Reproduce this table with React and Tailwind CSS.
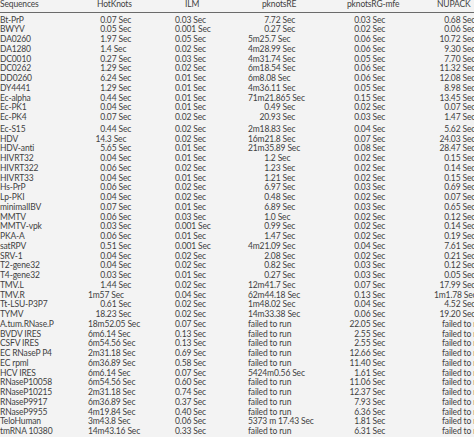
const rows = [
  ['Bt-PrP', '0.07 Sec', '0.03 Sec', '7.72 Sec', '0.03 Sec', '0.68 Sec'],
  ['BWYV', '0.05 Sec', '0.001 Sec', '0.27 Sec', '0.02 Sec', '0.06 Sec'],
  ['DA0260', '1.97 Sec', '0.05 Sec', '5m25.7 Sec', '0.06 Sec', '10.72 Sec'],
  ['DA1280', '1.4 Sec', '0.02 Sec', '4m28.99 Sec', '0.06 Sec', '9.30 Sec'],
  ['DC0010', '0.27 Sec', '0.03 Sec', '4m31.74 Sec', '0.05 Sec', '7.70 Sec'],
  ['DC0262', '1.29 Sec', '0.02 Sec', '6m18.54 Sec', '0.06 Sec', '11.32 Sec'],
  ['DD0260', '6.24 Sec', '0.01 Sec', '6m8.08 Sec', '0.06 Sec', '12.08 Sec'],
  ['DY4441', '1.29 Sec', '0.01 Sec', '4m36.11 Sec', '0.05 Sec', '8.98 Sec'],
  ['Ec-alpha', '0.44 Sec', '0.01 Sec', '71m21.865 Sec', '0.15 Sec', '13.45 Sec'],
  ['Ec-PK1', '0.04 Sec', '0.01 Sec', '0.49 Sec', '0.02 Sec', '0.07 Sec'],
  ['Ec-PK4', '0.07 Sec', '0.02 Sec', '20.93 Sec', '0.03 Sec', '1.47 Sec'],
];

const rows2 = [
  ['Ec-S15', '0.44 Sec', '0.02 Sec', '2m18.83 Sec', '0.04 Sec', '5.62 Sec'],
  ['HDV', '14.3 Sec', '0.02 Sec', '16m21.8 Sec', '0.07 Sec', '24.03 Sec'],
  ['HDV-anti', '5.65 Sec', '0.01 Sec', '21m35.89 Sec', '0.08 Sec', '28.47 Sec'],
  ['HIVRT32', '0.04 Sec', '0.01 Sec', '1.2 Sec', '0.02 Sec', '0.15 Sec'],
  ['HIVRT322', '0.06 Sec', '0.02 Sec', '1.23 Sec', '0.02 Sec', '0.14 Sec'],
  ['HIVRT33', '0.04 Sec', '0.01 Sec', '1.21 Sec', '0.02 Sec', '0.15 Sec'],
  ['Hs-PrP', '0.06 Sec', '0.02 Sec', '6.97 Sec', '0.03 Sec', '0.69 Sec'],
  ['Lp-PKI', '0.04 Sec', '0.02 Sec', '0.48 Sec', '0.02 Sec', '0.07 Sec'],
  ['minimalIBV', '0.07 Sec', '0.01 Sec', '6.89 Sec', '0.03 Sec', '0.65 Sec'],
  ['MMTV', '0.06 Sec', '0.03 Sec', '1.0 Sec', '0.02 Sec', '0.12 Sec'],
  ['MMTV-vpk', '0.03 Sec', '0.001 Sec', '0.99 Sec', '0.02 Sec', '0.14 Sec'],
  ['PKA-A', '0.06 Sec', '0.01 Sec', '1.47 Sec', '0.02 Sec', '0.19 Sec'],
  ['satRPV', '0.51 Sec', '0.001 Sec', '4m21.09 Sec', '0.04 Sec', '7.61 Sec'],
  ['SRV-1', '0.04 Sec', '0.02 Sec', '2.08 Sec', '0.02 Sec', '0.21 Sec'],
  ['T2-gene32', '0.04 Sec', '0.02 Sec', '0.82 Sec', '0.03 Sec', '0.12 Sec'],
  ['T4-gene32', '0.03 Sec', '0.01 Sec', '0.27 Sec', '0.03 Sec', '0.05 Sec'],
  ['TMV.L', '1.44 Sec', '0.02 Sec', '12m41.7 Sec', '0.07 Sec', '17.99 Sec'],
  ['TMV.R', '1m57 Sec', '0.04 Sec', '62m44.18 Sec', '0.13 Sec', '1m1.78 Sec'],
  ['Tt-LSU-P3P7', '0.61 Sec', '0.02 Sec', '1m48.02 Sec', '0.04 Sec', '4.52 Sec'],
  ['TYMV', '18.23 Sec', '0.02 Sec', '14m33.38 Sec', '0.06 Sec', '19.20 Sec'],
  ['A.tum.RNase.P', '18m52.05 Sec', '0.07 Sec', 'failed to run', '22.05 Sec', 'failed to run'],
  ['BVDV IRES', '6m6.14 Sec', '0.13 Sec', 'failed to run', '2.55 Sec', 'failed to run'],
  ['CSFV IRES', '6m54.56 Sec', '0.13 Sec', 'failed to run', '2.55 Sec', 'failed to run'],
  ['EC RNaseP P4', '2m31.18 Sec', '0.69 Sec', 'failed to run', '12.66 Sec', 'failed to run'],
  ['EC rpml', '6m36.89 Sec', '0.58 Sec', 'failed to run', '11.40 Sec', 'failed to run'],
  ['HCV IRES', '6m6.14 Sec', '0.07 Sec', '5424m0.56 Sec', '1.61 Sec', 'failed to run'],
  ['RNaseP10058', '6m54.56 Sec', '0.60 Sec', 'failed to run', '11.06 Sec', 'failed to run'],
  ['RNaseP10215', '2m31.18 Sec', '0.74 Sec', 'failed to run', '12.37 Sec', 'failed to run'],
  ['RNaseP9917', '6m36.89 Sec', '0.37 Sec', 'failed to run', '7.93 Sec', 'failed to run'],
  ['RNaseP9955', '4m19.84 Sec', '0.40 Sec', 'failed to run', '6.36 Sec', 'failed to run'],
  ['TeloHuman', '3m43.8 Sec', '0.06 Sec', '5373 m 17.43 Sec', '1.81 Sec', 'failed to run'],
  ['tmRNA 10380', '14m43.16 Sec', '0.33 Sec', 'failed to run', '6.31 Sec', 'failed to run'],
];

// decimal aligned value: integer part sits in a fixed right-aligned box
const Dec = ({ value, box, failPad = '' }) => {
  if (value.startsWith('failed')) return <span className={failPad}>{value}</span>;
  if (value.includes('m')) return <span>{value}</span>;
  const i = value.indexOf('.');
  return (
    <span className="flex">
      <span className={`inline-block text-right ${box}`}>{value.slice(0, i)}</span>
      <span>{value.slice(i)}</span>
    </span>
  );
};

const Row = ({ r }) => (
  <div className="flex h-[9.75px] items-center whitespace-nowrap">
    <div className="w-[88px] shrink-0">{r[0]}</div>
    <div className="w-[87px] shrink-0"><Dec value={r[1]} box="w-[17px]" /></div>
    <div className="w-[73px] shrink-0">{r[2]}</div>
    <div className="w-[97px] shrink-0"><Dec value={r[3]} box="w-[21px]" /></div>
    <div className="w-[89px] shrink-0"><Dec value={r[4]} box="w-[14px]" /></div>
    <div className="w-[60px] shrink-0"><Dec value={r[5]} box="w-[15px]" failPad="pl-[8px]" /></div>
  </div>
);

export default function App() {
  return (
    <div
      className="h-[437px] w-[474px] overflow-hidden bg-[#f3f3f3] text-[8.5px] leading-none tracking-[-0.15px] text-[#3f3f3f]"
      style={{ fontFamily: 'Lato, "Open Sans", sans-serif' }}
    >
      <div className="flex h-[12.5px] items-center whitespace-nowrap border-b border-[#6a6a6a] pb-[3px]">
        <div className="w-[88px] shrink-0">Sequences</div>
        <div className="w-[87px] shrink-0 pl-[9px]">HotKnots</div>
        <div className="w-[73px] shrink-0 pl-[10px]">ILM</div>
        <div className="w-[97px] shrink-0 pl-[14px]">pknotsRE</div>
        <div className="w-[89px] shrink-0 pl-[2px]">pknotsRG-mfe</div>
        <div className="w-[60px] shrink-0 pl-[3px]">NUPACK</div>
      </div>
      <div className="pt-[2.5px]">
        {rows.map((r) => <Row key={r[0]} r={r} />)}
        <div className="h-[2px]" />
        {rows2.map((r) => <Row key={r[0]} r={r} />)}
      </div>
    </div>
  );
}
